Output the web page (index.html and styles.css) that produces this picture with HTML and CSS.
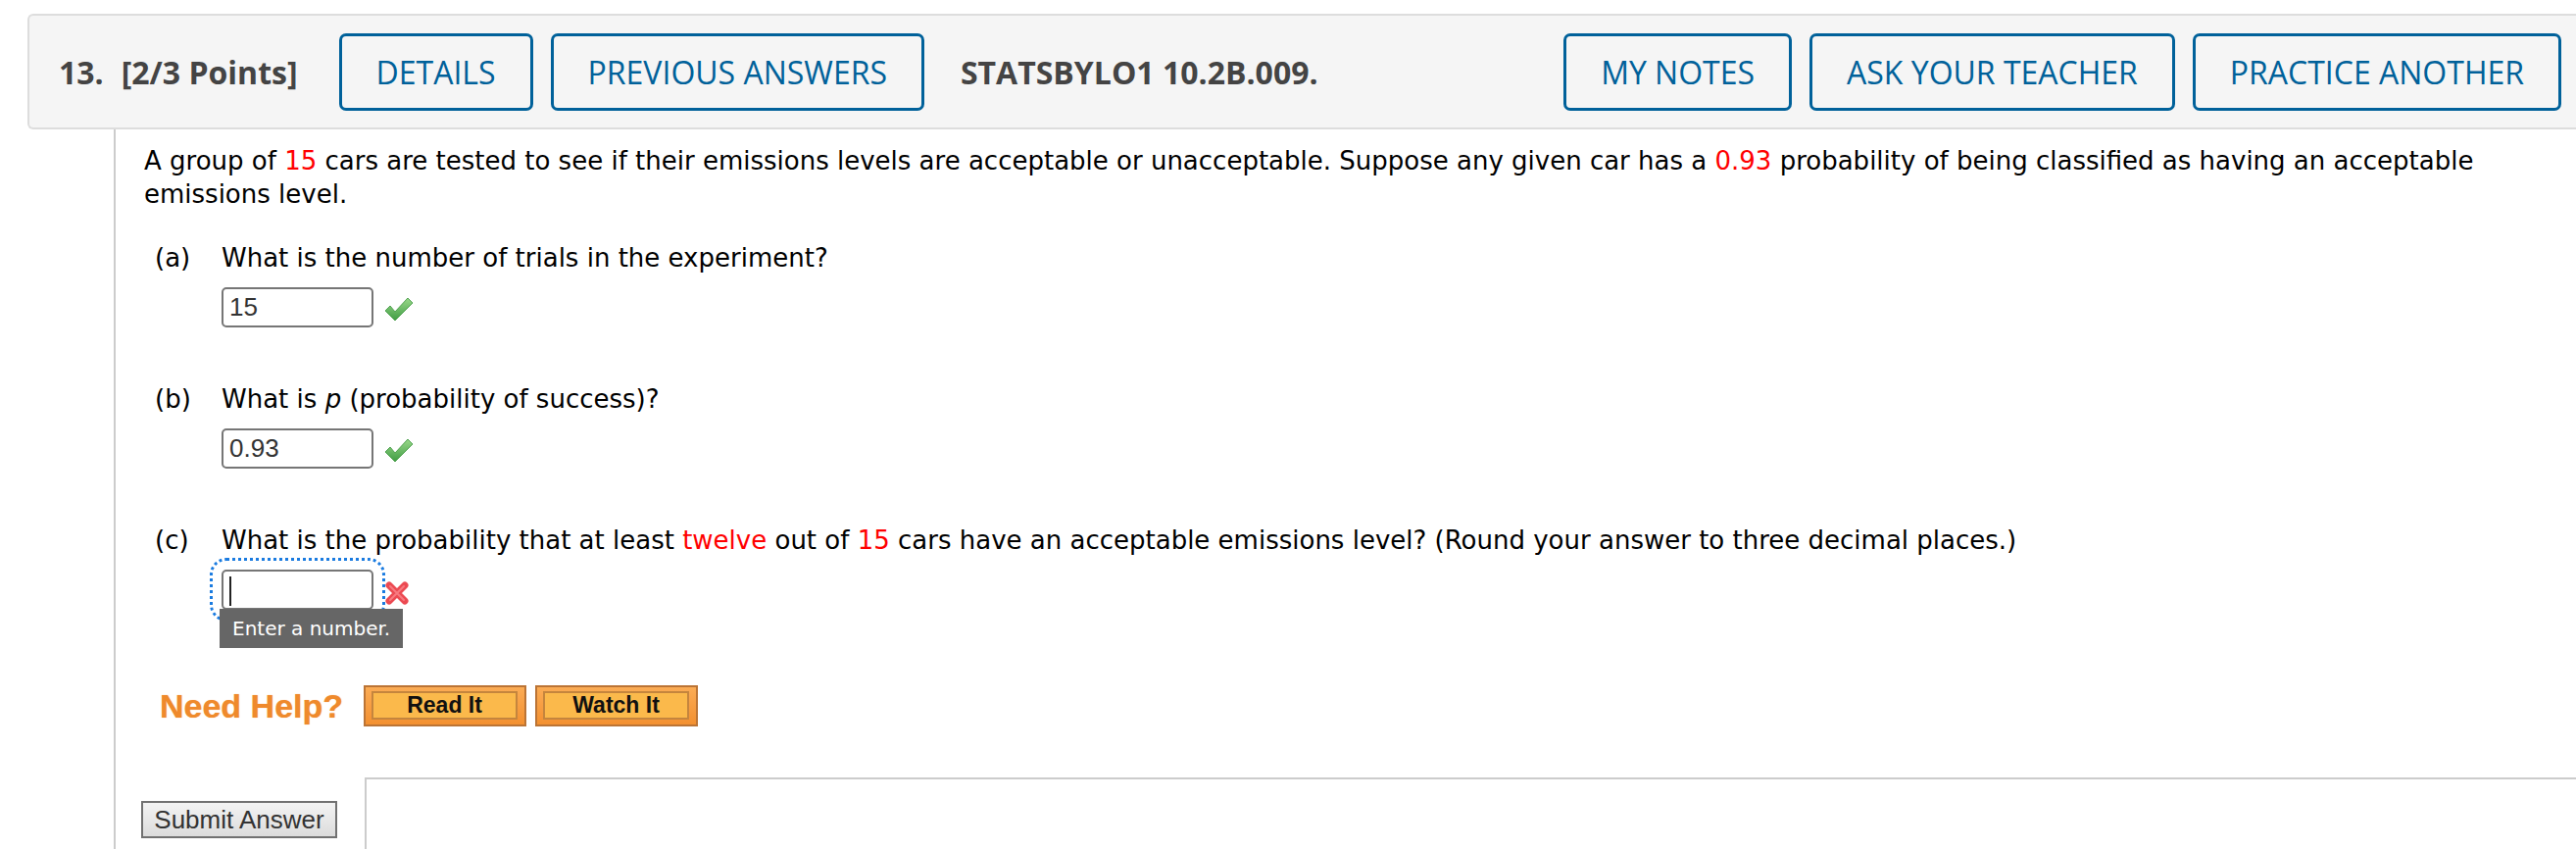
FILE: index.html
```html
<!DOCTYPE html>
<html lang="en">
<head>
<meta charset="utf-8">
<title>Question 13</title>
<link rel="stylesheet" href="styles.css">
</head>
<body>
<div class="page">
  <header class="qhead">
    <div class="qnum"><span class="num">13.</span><span>[2/3 Points]</span></div>
    <a class="hbtn">DETAILS</a>
    <a class="hbtn">PREVIOUS ANSWERS</a>
    <div class="qcode">STATSBYLO1 10.2B.009.</div>
    <div class="spacer"></div>
    <a class="hbtn">MY NOTES</a>
    <a class="hbtn">ASK YOUR TEACHER</a>
    <a class="hbtn">PRACTICE ANOTHER</a>
  </header>
  <main class="qbody">
    <p class="intro">A group of <span class="red">15</span> cars are tested to see if their emissions levels are acceptable or unacceptable. Suppose any given car has a <span class="red">0.93</span> probability of being classified as having an acceptable<br>emissions level.</p>

    <div class="part">
      <span class="plabel">(a)</span>
      <div class="ptext">What is the number of trials in the experiment?</div>
      <div class="answer">
        <span class="field">15</span>
        <svg class="mark" width="30" height="25" viewBox="0 0 30 25"><defs><linearGradient id="ga" x1="0" y1="0" x2="0" y2="1"><stop offset="0" stop-color="#9ad88a"/><stop offset="1" stop-color="#3f9c43"/></linearGradient></defs><path d="M1 14 L6 9 L11 15 L24 1 L29 6 L11 24 Z" fill="url(#ga)" stroke="#52a352" stroke-width="1" stroke-linejoin="round"/></svg>
      </div>
    </div>

    <div class="part">
      <span class="plabel">(b)</span>
      <div class="ptext">What is <i>p</i> (probability of success)?</div>
      <div class="answer">
        <span class="field">0.93</span>
        <svg class="mark" width="30" height="25" viewBox="0 0 30 25"><defs><linearGradient id="gb" x1="0" y1="0" x2="0" y2="1"><stop offset="0" stop-color="#9ad88a"/><stop offset="1" stop-color="#3f9c43"/></linearGradient></defs><path d="M1 14 L6 9 L11 15 L24 1 L29 6 L11 24 Z" fill="url(#gb)" stroke="#52a352" stroke-width="1" stroke-linejoin="round"/></svg>
      </div>
    </div>

    <div class="part">
      <span class="plabel">(c)</span>
      <div class="ptext">What is the probability that at least <span class="red">twelve</span> out of <span class="red">15</span> cars have an acceptable emissions level? (Round your answer to three decimal places.)</div>
      <div class="answer">
        <span class="field focus"><span class="caret"></span></span>
        <svg class="xmark" width="26" height="26" viewBox="0 0 26 26"><path d="M5 5 L21 21 M21 5 L5 21" stroke="#ec4a52" stroke-width="7" stroke-linecap="round"/><path d="M6 6 L20 20 M20 6 L6 20" stroke="#f77a80" stroke-width="2" stroke-linecap="round"/></svg>
        <span class="tip">Enter a number.</span>
      </div>
    </div>

    <div class="help">
      <span class="help-label">Need Help?</span>
      <a class="hb"><span>Read It</span></a>
      <a class="hb"><span>Watch It</span></a>
    </div>

    <div class="submit-row">
      <button class="submit" type="button">Submit Answer</button>
      <div class="ans-box"></div>
    </div>
  </main>
</div>
</body>
</html>
```

FILE: styles.css
```css
html, body {
  margin: 0;
  height: 100%;
  overflow: hidden;
  background: #fff;
}

.page {
  padding-top: 14px;
}

.qhead {
  display: flex;
  align-items: center;
  box-sizing: border-box;
  height: 118px;
  margin-left: 28px;
  padding: 0 15px 0 30px;
  background: #f5f5f5;
  border: 2px solid #dddddd;
  border-right: 0;
  border-radius: 6px 0 0 6px;
  font-family: "Open Sans", sans-serif;
}

.qnum {
  font-size: 32px;
  font-weight: 700;
  color: #444;
  margin-right: 42px;
  white-space: nowrap;
}

.qnum .num {
  margin-right: 18px;
}

.hbtn {
  display: flex;
  align-items: center;
  box-sizing: border-box;
  height: 79px;
  padding: 0 35px;
  border: 3px solid #00619a;
  border-radius: 7px;
  color: #00619a;
  font-size: 32px;
  white-space: nowrap;
}

.hbtn + .hbtn {
  margin-left: 18px;
}

.qcode {
  margin-left: 37px;
  font-size: 32px;
  font-weight: 700;
  color: #444;
  white-space: nowrap;
}

.spacer {
  flex: 1;
}

.qbody {
  display: block;
  box-sizing: border-box;
  height: 734px;
  margin-left: 116px;
  border-left: 2px solid #cccccc;
  padding: 15px 80px 0 29px;
  font-family: "DejaVu Sans", Verdana, sans-serif;
  font-size: 26px;
  line-height: 34px;
  color: #000;
}

.intro {
  margin: 0;
}

.red {
  color: #ff0000;
}

.part {
  display: grid;
  grid-template-columns: 68px auto;
  margin: 31px 0 0 11px;
}

.part + .part {
  margin-top: 56px;
}

.answer {
  grid-column: 2;
  position: relative;
  display: flex;
  align-items: center;
  height: 41px;
  margin-top: 13px;
}

.field {
  display: block;
  box-sizing: border-box;
  width: 155px;
  height: 41px;
  padding: 0 6px;
  border: 2px solid #767676;
  border-radius: 5px;
  font-family: "Liberation Sans", Arial, sans-serif;
  font-size: 26px;
  line-height: 37px;
  color: #333;
  background: #fff;
}

.field.focus {
  outline: 3px dotted #1a7be0;
  outline-offset: 9px;
}

.caret {
  display: inline-block;
  width: 2px;
  height: 30px;
  background: #222;
  vertical-align: middle;
}

.mark {
  margin: 4px 0 0 11px;
}

.xmark {
  margin: 6px 0 0 11px;
}

.tip {
  position: absolute;
  z-index: 2;
  left: -2px;
  top: 40px;
  height: 40px;
  padding: 0 13px;
  background: #666666;
  color: #fff;
  font-family: "DejaVu Sans", Verdana, sans-serif;
  font-size: 20px;
  line-height: 40px;
  white-space: nowrap;
}

.help {
  display: flex;
  align-items: center;
  margin: 77px 0 0 16px;
}

.help-label {
  font-family: "Liberation Sans", Arial, sans-serif;
  font-weight: 700;
  font-size: 34px;
  color: #ef8a2c;
  text-shadow: 0 0 1px rgba(239, 138, 44, 0.7);
  margin-right: 21px;
}

.hb {
  display: block;
  box-sizing: border-box;
  width: 166px;
  height: 42px;
  padding: 4px 7px 5px 6px;
  border: 2px solid #bb7435;
  background: linear-gradient(#fbac55, #f39030);
}

.hb + .hb {
  margin-left: 9px;
}

.hb span {
  display: block;
  box-sizing: border-box;
  height: 100%;
  border: 2px solid #c5853d;
  background: #fbb94b;
  font-family: "Liberation Sans", Arial, sans-serif;
  font-weight: 700;
  font-size: 23px;
  line-height: 24px;
  color: #111;
  text-align: center;
}

.submit-row {
  display: flex;
  align-items: flex-start;
  margin: 52px -120px 0 -3px;
}

.submit {
  box-sizing: border-box;
  width: 200px;
  height: 38px;
  margin-top: 24px;
  padding: 0;
  border: 2px solid #717171;
  background: linear-gradient(#f3f3f3, #dcdcdc);
  font-family: "Liberation Sans", Arial, sans-serif;
  font-size: 26px;
  color: #333;
}

.ans-box {
  flex: 1;
  height: 200px;
  margin-left: 28px;
  border: 2px solid #cccccc;
}
```
